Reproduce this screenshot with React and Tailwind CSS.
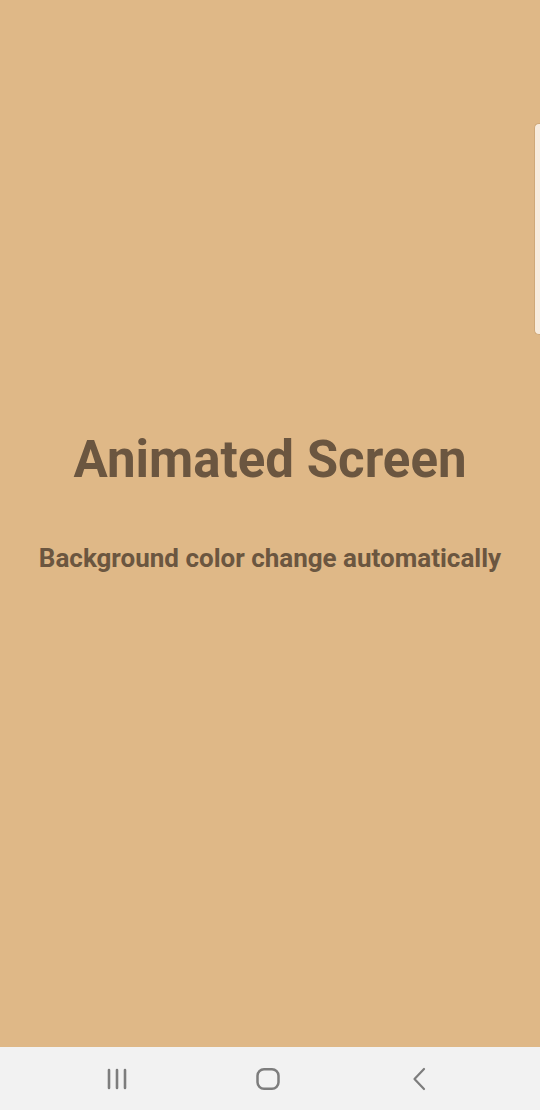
export default function App() {
  return (
    <div className="flex h-[1110px] w-[540px] flex-col bg-[#dfb887] font-['Roboto',sans-serif]">
      <div className="relative flex flex-1 flex-col items-center justify-center pb-[42px]">
        <div className="absolute right-0 top-[123px] h-[212px] w-[6px] rounded-l-[5px] border border-r-0 border-[#cfa878] bg-[#f8ecde]" />
        <h1 className="text-[51px] font-bold leading-none text-[#6b5640]">Animated Screen</h1>
        <p className="mt-[60px] text-[26px] font-bold leading-none text-[#6b5640]">Background color change automatically</p>
      </div>
      <div className="flex h-[63px] items-center bg-[#f2f2f2] pl-[107px] text-[#7d7d7d]">
        <svg width="20" height="22" viewBox="0 0 20 22">
          <path d="M2 2v18M10 2v18M18 2v18" stroke="currentColor" strokeWidth="2.6" strokeLinecap="round" />
        </svg>
        <svg width="24" height="22" viewBox="0 0 24 22" className="ml-[129px]">
          <rect x="1.5" y="1.3" width="21" height="19.4" rx="6.5" fill="none" stroke="currentColor" strokeWidth="2.5" />
        </svg>
        <svg width="14" height="24" viewBox="0 0 14 24" className="ml-[132px]">
          <path d="M12 2L2.5 12l9.5 10" fill="none" stroke="currentColor" strokeWidth="2.2" strokeLinecap="round" strokeLinejoin="round" />
        </svg>
      </div>
    </div>
  );
}
